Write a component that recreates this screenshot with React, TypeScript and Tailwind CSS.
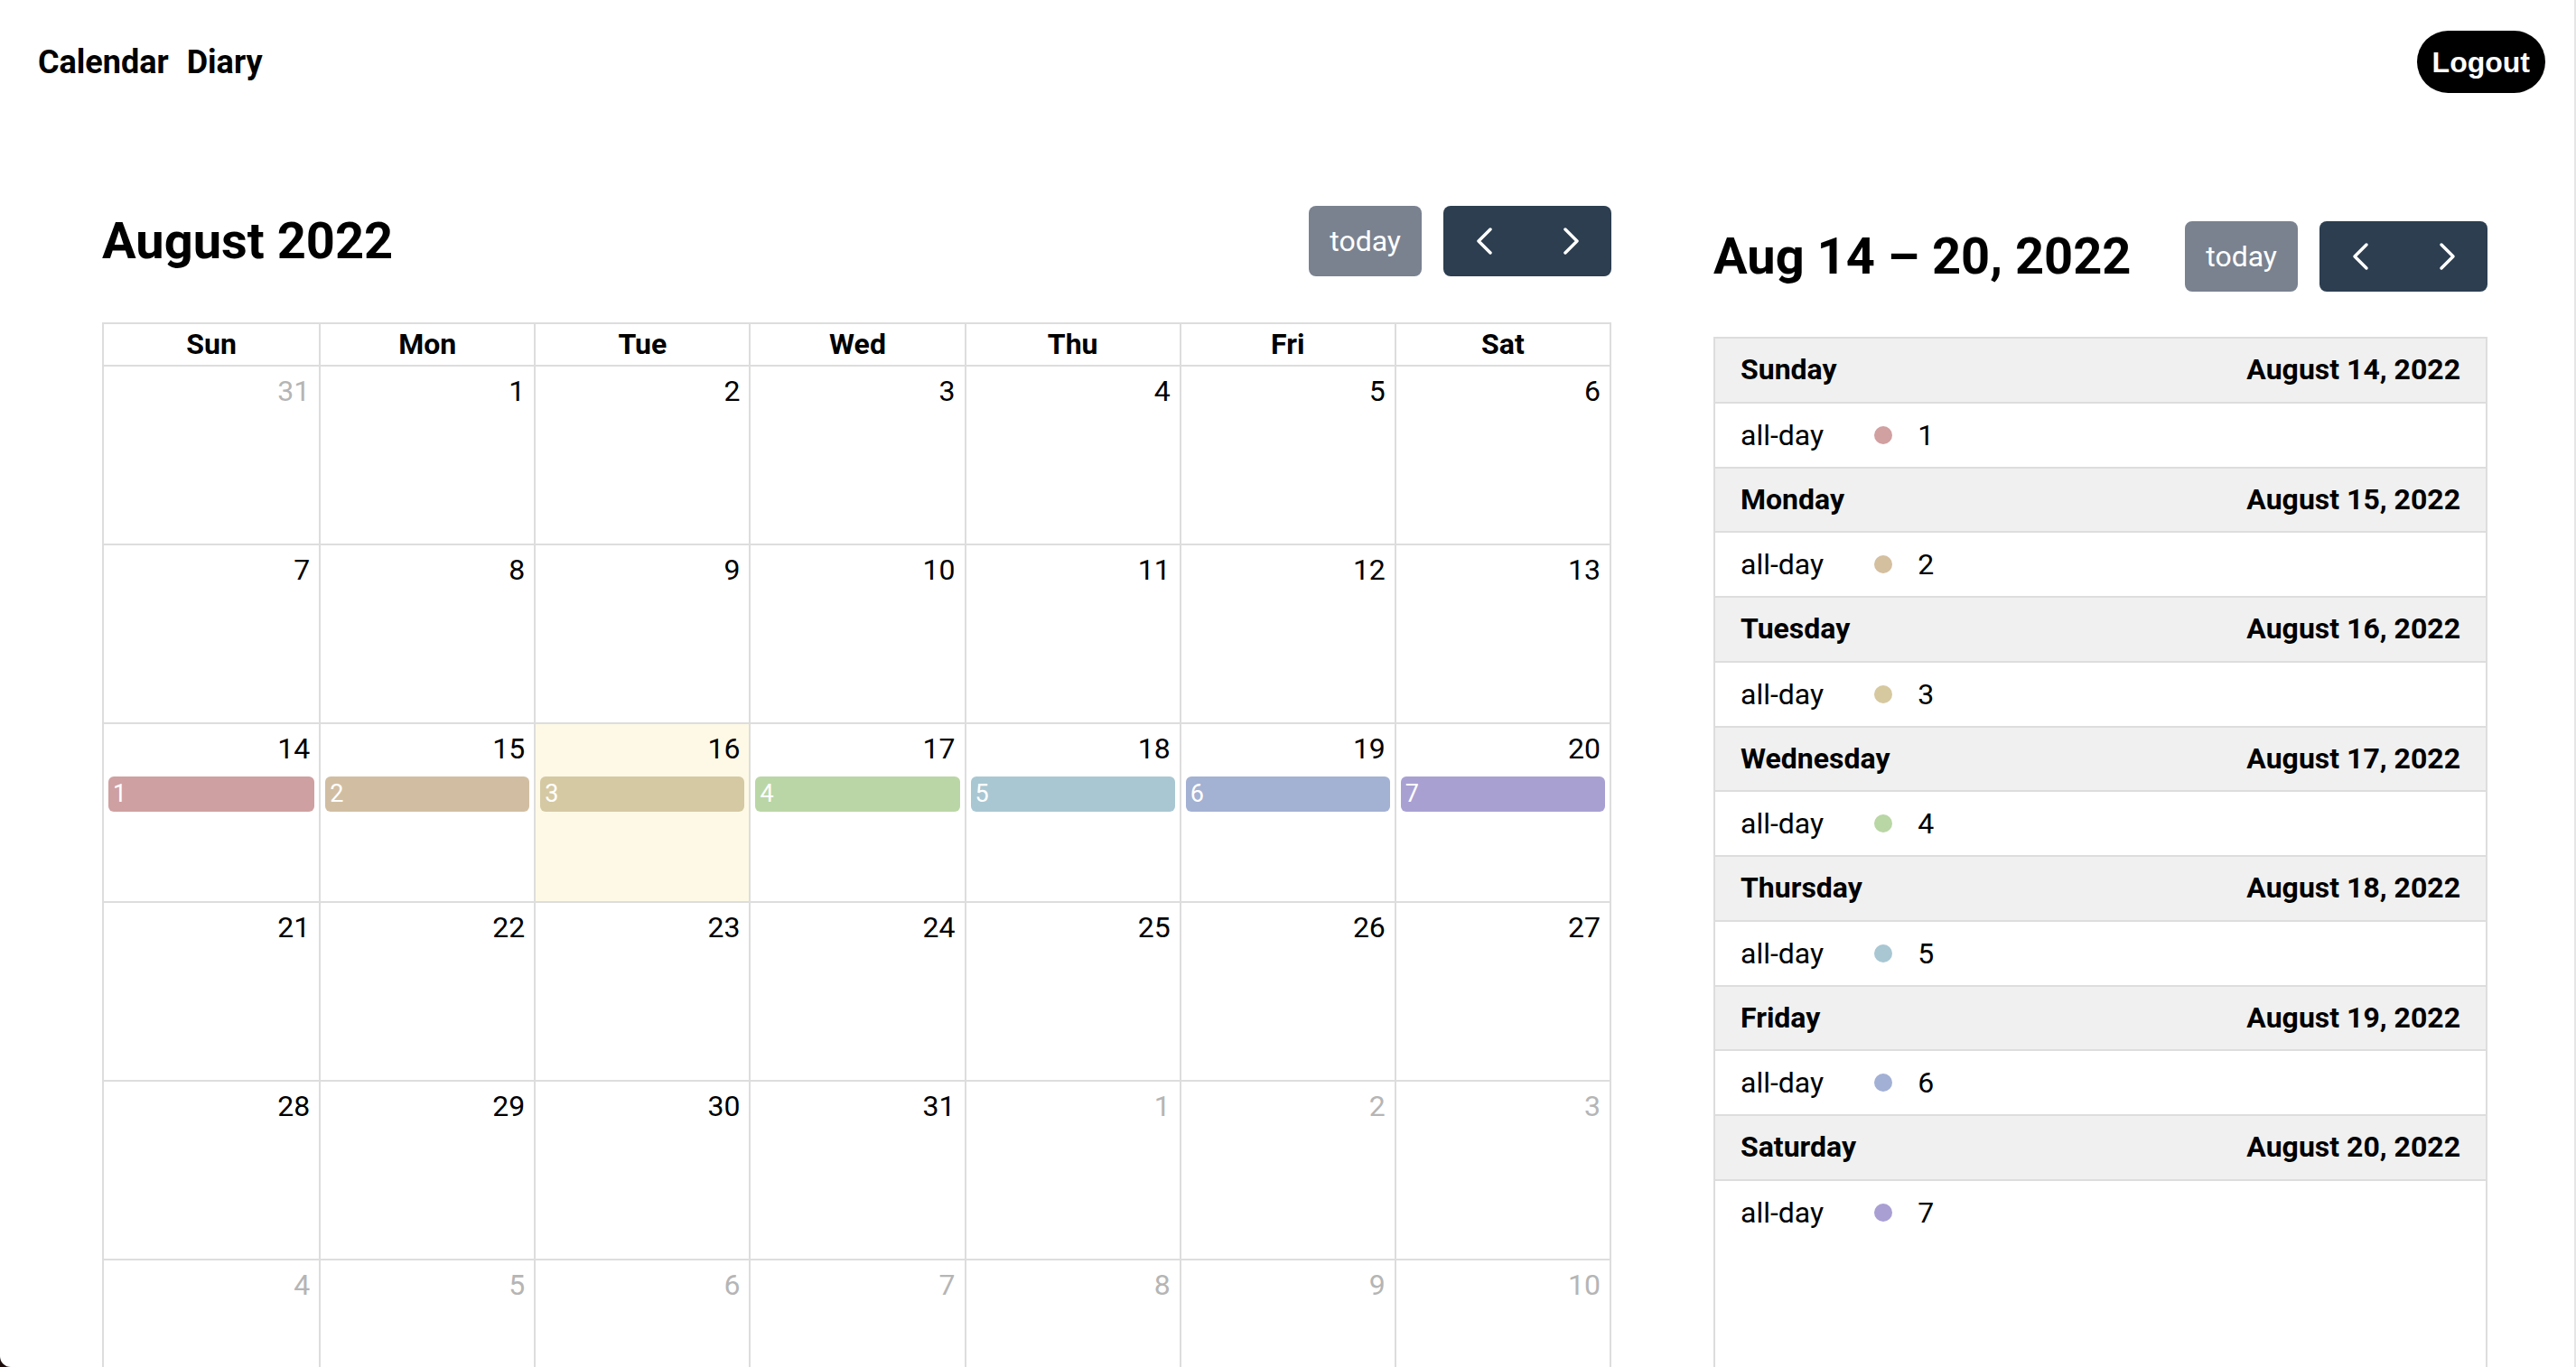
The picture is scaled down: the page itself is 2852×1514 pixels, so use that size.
const weekdays = ["Sun", "Mon", "Tue", "Wed", "Thu", "Fri", "Sat"];

type Day = { n: number; other?: boolean; today?: boolean; event?: { title: string; color: string } };

const weeks: Day[][] = [
  [{ n: 31, other: true }, { n: 1 }, { n: 2 }, { n: 3 }, { n: 4 }, { n: 5 }, { n: 6 }],
  [{ n: 7 }, { n: 8 }, { n: 9 }, { n: 10 }, { n: 11 }, { n: 12 }, { n: 13 }],
  [
    { n: 14, event: { title: "1", color: "bg-[#cfa0a1]" } },
    { n: 15, event: { title: "2", color: "bg-[#d1bea2]" } },
    { n: 16, today: true, event: { title: "3", color: "bg-[#d5c9a3]" } },
    { n: 17, event: { title: "4", color: "bg-[#bad6a6]" } },
    { n: 18, event: { title: "5", color: "bg-[#a9c7d2]" } },
    { n: 19, event: { title: "6", color: "bg-[#a3b1d3]" } },
    { n: 20, event: { title: "7", color: "bg-[#a9a0d2]" } },
  ],
  [{ n: 21 }, { n: 22 }, { n: 23 }, { n: 24 }, { n: 25 }, { n: 26 }, { n: 27 }],
  [{ n: 28 }, { n: 29 }, { n: 30 }, { n: 31 }, { n: 1, other: true }, { n: 2, other: true }, { n: 3, other: true }],
  [
    { n: 4, other: true },
    { n: 5, other: true },
    { n: 6, other: true },
    { n: 7, other: true },
    { n: 8, other: true },
    { n: 9, other: true },
    { n: 10, other: true },
  ],
];

const listDays = [
  { name: "Sunday", date: "August 14, 2022", title: "1", color: "bg-[#d1a0a1]" },
  { name: "Monday", date: "August 15, 2022", title: "2", color: "bg-[#d4bf9f]" },
  { name: "Tuesday", date: "August 16, 2022", title: "3", color: "bg-[#d6c9a0]" },
  { name: "Wednesday", date: "August 17, 2022", title: "4", color: "bg-[#b9d6a5]" },
  { name: "Thursday", date: "August 18, 2022", title: "5", color: "bg-[#a8c7d3]" },
  { name: "Friday", date: "August 19, 2022", title: "6", color: "bg-[#a2b0d5]" },
  { name: "Saturday", date: "August 20, 2022", title: "7", color: "bg-[#a99fd3]" },
];

function Chevron({ dir }: { dir: "left" | "right" }) {
  return (
    <svg
      viewBox="0 0 48 48"
      className="h-[48px] w-[48px]"
      fill="none"
      stroke="currentColor"
      strokeWidth={3.5}
      strokeLinecap="round"
      strokeLinejoin="round"
    >
      {dir === "left" ? <polyline points="29,11 16,24 29,37" /> : <polyline points="19,11 32,24 19,37" />}
    </svg>
  );
}

function Toolbar({ title }: { title: string }) {
  return (
    <div className="flex h-[80px] items-center justify-between">
      <h2 className="text-[56px] font-bold leading-[66px]">{title}</h2>
      <div className="flex items-center gap-[24px]">
        <button className="h-[78px] rounded-[8px] bg-[#7a8290] px-[23px] text-[32px] leading-[48px] text-white">
          today
        </button>
        <div className="flex h-[78px]">
          <button className="flex w-[93px] items-center justify-center rounded-l-[8px] bg-[#2c3e50] text-white">
            <Chevron dir="left" />
          </button>
          <button className="flex w-[93px] items-center justify-center rounded-r-[8px] bg-[#2c3e50] text-white">
            <Chevron dir="right" />
          </button>
        </div>
      </div>
    </div>
  );
}

function MonthGrid() {
  return (
    <div className="mt-[50px] border-2 border-b-0 border-[#ddd]">
      <div className="grid grid-cols-7">
        {weekdays.map((d, i) => (
          <div
            key={d}
            className={`py-[4px] text-center text-[32px] font-bold leading-[37px] ${i > 0 ? "border-l-2 border-[#ddd]" : ""}`}
          >
            {d}
          </div>
        ))}
      </div>
      {weeks.map((week, w) => (
        <div key={w} className="grid grid-cols-7 border-t-2 border-[#ddd]">
          {week.map((day, i) => (
            <div
              key={i}
              className={`h-[196px] ${i > 0 ? "border-l-2 border-[#ddd]" : ""} ${day.today ? "bg-[#fef9e6]" : ""}`}
            >
              <div
                className={`px-[10px] pt-[8px] text-right text-[32px] leading-[38px] ${day.other ? "text-[#b5b5b5]" : "text-black"}`}
              >
                {day.n}
              </div>
              {day.event && (
                <div
                  className={`mx-[5px] mt-[12px] h-[39px] rounded-[6px] px-[5px] text-[27px] leading-[39px] text-white ${day.event.color}`}
                >
                  {day.event.title}
                </div>
              )}
            </div>
          ))}
        </div>
      ))}
    </div>
  );
}

function WeekList() {
  return (
    <div className="mt-[49px] h-[1250px] border-2 border-[#ddd]">
      {listDays.map((d, i) => (
        <div key={d.name}>
          <div className="flex justify-between border-b-2 border-[#ddd] bg-[#f0f0f0] px-[28px] py-[16px] text-[32px] font-bold leading-[37.5px]">
            <span>{d.name}</span>
            <span>{d.date}</span>
          </div>
          <div
            className={`flex items-center py-[16px] text-[32px] leading-[38px] ${i < listDays.length - 1 ? "border-b-2 border-[#ddd]" : ""}`}
          >
            <span className="px-[28px]">all-day</span>
            <span className="pl-[28px]">
              <span className={`block h-[20px] w-[20px] rounded-full ${d.color}`} />
            </span>
            <span className="pl-[28px]">{d.title}</span>
          </div>
        </div>
      ))}
    </div>
  );
}

export default function App() {
  return (
    <div className="relative h-screen overflow-hidden border-r-2 border-[#e6e6e6] bg-white font-['Roboto','Noto_Sans',sans-serif] text-black">
      <header className="mt-[34px] flex h-[69px] items-center justify-between pl-[42px] pr-[32px]">
        <nav className="flex gap-[20px] text-[36px] font-bold leading-[42px]">
          <span>Calendar</span>
          <span>Diary</span>
        </nav>
        <button className="h-[69px] rounded-full bg-black px-[17px] font-['Liberation_Sans',Arial,sans-serif] text-[32px] font-bold text-white">
          Logout
        </button>
      </header>

      <main className="mt-[124px] flex pl-[113px]">
        <section className="w-[1671px]">
          <Toolbar title="August 2022" />
          <MonthGrid />
        </section>
        <section className="ml-[113px] mt-[17px] w-[857px]">
          <Toolbar title="Aug 14 – 20, 2022" />
          <WeekList />
        </section>
      </main>

      <div className="absolute bottom-0 left-0 h-[12px] w-[12px] bg-[#1c0c0c]">
        <div className="h-full w-full rounded-bl-[12px] bg-white" />
      </div>
    </div>
  );
}
